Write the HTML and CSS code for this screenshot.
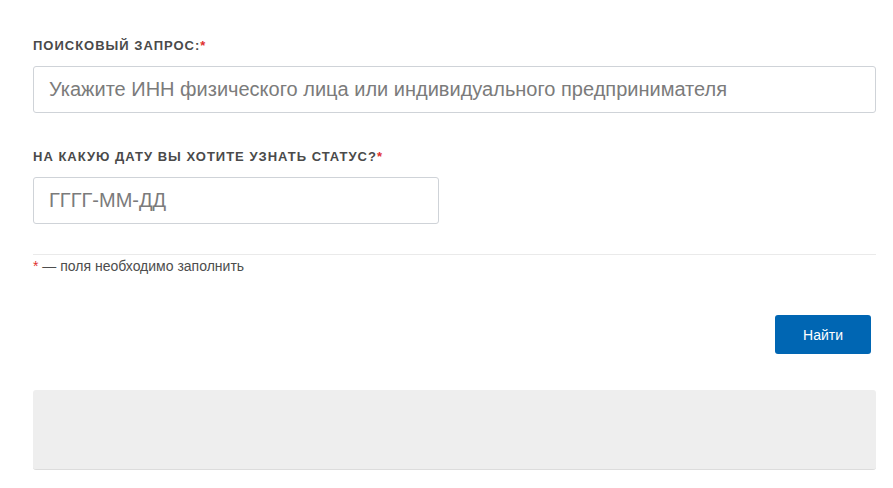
FILE: index.html
```html
<!DOCTYPE html>
<html lang="ru">
<head>
<meta charset="utf-8">
<link rel="stylesheet" href="styles.css">
</head>
<body>
<form class="form">
  <div class="field">
    <label class="label">Поисковый запрос:<span class="req">*</span></label>
    <input class="input input-wide" type="text" placeholder="Укажите ИНН физического лица или индивидуального предпринимателя">
  </div>
  <div class="field field-second">
    <label class="label">На какую дату вы хотите узнать статус?<span class="req">*</span></label>
    <input class="input input-date" type="text" placeholder="ГГГГ-ММ-ДД">
  </div>
  <div class="divider"></div>
  <p class="note"><span class="req">*</span> — поля необходимо заполнить</p>
  <div class="actions">
    <button class="btn" type="button">Найти</button>
  </div>
  <div class="result"></div>
</form>
</body>
</html>
```
FILE: styles.css
```css
html, body {
  margin: 0;
  padding: 0;
  background: #fff;
  font-family: "Liberation Sans", Arial, sans-serif;
}
.form {
  padding: 38px 17px 0 33px;
}
.field {
  display: flex;
  flex-direction: column;
  align-items: flex-start;
}
.field-second {
  margin-top: 36px;
}
.label {
  font-size: 13px;
  line-height: 16px;
  font-weight: bold;
  text-transform: uppercase;
  letter-spacing: 1px;
  color: #4a4a4a;
  margin-bottom: 12px;
}
.req {
  color: #e0312f;
  letter-spacing: 0;
}
.input {
  box-sizing: border-box;
  height: 47px;
  border: 1px solid #cfd3d8;
  border-radius: 3px;
  padding: 0 15px;
  font-family: "Liberation Sans", Arial, sans-serif;
  font-size: 20px;
  color: #333;
  background: #fff;
  outline: none;
}
.input::placeholder {
  color: #7b7b7b;
}
.input-wide {
  width: 100%;
}
.input-date {
  width: 406px;
}
.divider {
  margin-top: 30px;
  height: 1px;
  background: #eaeaea;
}
.note {
  margin: 3px 0 0;
  font-size: 14px;
  line-height: 17px;
  color: #4d4d4d;
}
.actions {
  display: flex;
  justify-content: flex-end;
  padding-right: 5px;
  margin-top: 40px;
}
.btn {
  width: 96px;
  height: 39px;
  border: none;
  border-radius: 3px;
  background: #0066b3;
  color: #fff;
  font-family: "Liberation Sans", Arial, sans-serif;
  font-size: 14px;
  cursor: pointer;
}
.result {
  margin-top: 36px;
  height: 79px;
  background: #eeeeee;
  border-bottom: 1px solid #dcdcdc;
  border-radius: 3px;
}
```
